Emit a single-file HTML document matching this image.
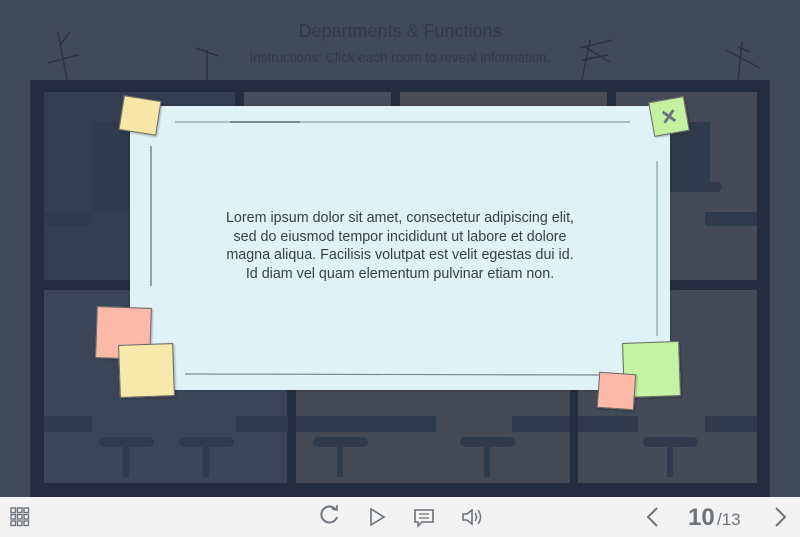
<!DOCTYPE html>
<html><head><style>
*{margin:0;padding:0;box-sizing:border-box}
body{width:800px;height:537px;overflow:hidden;background:#3f4a5b;font-family:"Liberation Sans",sans-serif;position:relative}
.a{position:absolute}
.room{position:absolute;background:#354254}
.note{position:absolute;border:1px solid #6a6a6a;box-shadow:1px 1px 2px rgba(0,0,0,.3)}
</style></head><body>
<div class="a" style="left:0;top:21px;width:800px;text-align:center;color:#2f3a4b;font-size:18px">Departments &amp; Functions</div>
<div class="a" style="left:0;top:50px;width:800px;text-align:center;color:#2f3a4b;font-size:13.4px">Instructions: Click each room to reveal information.</div>
<svg class="a" style="left:0;top:0" width="800" height="90"><g stroke="#2a3342" stroke-width="1.5" fill="none">
<path d="M58 32 L67 80 M48 63 L78 55 M60 45 L70 32"/><path d="M207 50 L207 80 M196 48 L218 56"/>
<path d="M590 40 L582 80 M580 48 L612 40 M582 60 L608 55 M585 47 L610 62"/><path d="M742 42 L738 80 M726 50 L760 68 M738 47 L750 52"/></g></svg>
<div class="a" style="left:30px;top:80px;width:740px;height:417px;background:#242d3f"></div>
<div class="room" style="left:44px;top:92px;width:191px;height:188px;background:#323e51"></div>
<div class="room" style="left:244px;top:92px;width:147px;height:188px;background:#464d5d"></div>
<div class="room" style="left:400px;top:92px;width:207px;height:188px;background:#4a4b57"></div>
<div class="room" style="left:616px;top:92px;width:141px;height:188px;background:#464a58"></div>
<div class="room" style="left:44px;top:290px;width:243px;height:193px;background:#3a4658"></div>
<div class="room" style="left:296px;top:290px;width:274px;height:193px;background:#454955"></div>
<div class="room" style="left:578px;top:290px;width:179px;height:193px;background:#434a58"></div>
<svg class="a" style="left:0;top:0" width="800" height="497"><g fill="#2f3b4c">
<rect x="44" y="416" width="48" height="16"/><rect x="236" y="416" width="52" height="16"/><rect x="296" y="416" width="140" height="16"/><rect x="512" y="416" width="58" height="16"/><rect x="578" y="416" width="60" height="16"/><rect x="705" y="416" width="52" height="16"/>
<rect x="99" y="437" width="55" height="10" rx="5"/><rect x="179" y="437" width="55" height="10" rx="5"/><rect x="313" y="437" width="55" height="10" rx="5"/><rect x="460" y="437" width="55" height="10" rx="5"/><rect x="643" y="437" width="55" height="10" rx="5"/>
<rect x="123" y="447" width="6" height="30"/><rect x="203" y="447" width="6" height="30"/><rect x="337" y="447" width="6" height="30"/><rect x="484" y="447" width="6" height="30"/><rect x="667" y="447" width="6" height="30"/>
<rect x="670" y="182" width="52" height="10" rx="5"/><rect x="44" y="212" width="48" height="14"/><rect x="705" y="212" width="52" height="14"/>
<rect x="92" y="122" width="38" height="90"/><rect x="670" y="122" width="40" height="70"/></g></svg>
<div class="a" style="left:130px;top:106px;width:540px;height:284px;background:#dff2f7;box-shadow:0 0 3px rgba(0,0,0,.3)"></div>
<svg class="a" style="left:130px;top:106px" width="540" height="284"><g stroke="#7a8a94" fill="none">
<path d="M45 16 L500 16" stroke-width="1"/><path d="M100 16 L170 16" stroke-width="2"/>
<path d="M21 40 L21 180" stroke-width="1.5"/><path d="M527 55 L527 230" stroke-width="1"/>
<path d="M55 268 L480 269" stroke-width="1.2"/></g></svg>
<div class="a" style="left:130px;top:209px;width:540px;text-align:center;color:#363e4c;font-size:14.3px;line-height:18.5px">Lorem ipsum dolor sit amet, consectetur adipiscing elit,<br>sed do eiusmod tempor incididunt ut labore et dolore<br>magna aliqua. Facilisis volutpat est velit egestas dui id.<br>Id diam vel quam elementum pulvinar etiam non.</div>
<div class="note" style="left:121px;top:98px;width:38px;height:35px;background:#f7e6a6;transform:rotate(9deg)"></div>
<div class="note" style="left:651px;top:99px;width:36px;height:35px;background:#c5f0a0;transform:rotate(-10deg);color:#6b7480;font-size:26px;font-weight:bold;text-align:center;line-height:33px">×</div>
<div class="note" style="left:96px;top:307px;width:55px;height:52px;background:#fdb8a8;transform:rotate(2deg)"></div>
<div class="note" style="left:119px;top:344px;width:55px;height:53px;background:#f7e8ac;transform:rotate(-2deg)"></div>
<div class="note" style="left:623px;top:342px;width:57px;height:55px;background:#c4f3a3;transform:rotate(-2deg)"></div>
<div class="note" style="left:598px;top:373px;width:37px;height:36px;background:#fdb8a8;transform:rotate(4deg)"></div>
<div class="a" style="left:0;top:497px;width:800px;height:40px;background:#f3f3f3"></div>
<svg class="a" style="left:0;top:497px" width="800" height="40"><g fill="none" stroke="#6c737b" stroke-width="2">
<g stroke-width="1.4"><rect x="11" y="11" width="4.5" height="4.5"/><rect x="17.5" y="11" width="4.5" height="4.5"/><rect x="24" y="11" width="4.5" height="4.5"/><rect x="11" y="17.5" width="4.5" height="4.5"/><rect x="17.5" y="17.5" width="4.5" height="4.5"/><rect x="24" y="17.5" width="4.5" height="4.5"/><rect x="11" y="24" width="4.5" height="4.5"/><rect x="17.5" y="24" width="4.5" height="4.5"/><rect x="24" y="24" width="4.5" height="4.5"/></g>
<path d="M336 13 A8 8 0 1 0 337 20"/><path d="M332 12 L337 13 L337 8" stroke-width="1.6"/>
<path d="M371 12 L384 20 L371 28 Z" stroke-width="1.6"/>
<path d="M415 13 H433 V25 H422 L418 29 V25 H415 Z" stroke-width="1.6"/><path d="M419 17 H429 M419 21 H429" stroke-width="1.3"/>
<path d="M463 17 H467 L472 13 V27 L467 23 H463 Z" stroke-width="1.6"/><path d="M475 16 Q478 20 475 24 M478 13 Q483 20 478 27" stroke-width="1.5"/>
<path d="M657 11 L648 20 L657 29"/><path d="M776 11 L785 20 L776 29"/></g>
<text x="688" y="28" font-family="Liberation Sans" font-size="24" font-weight="bold" fill="#6c737b">10</text>
<text x="717" y="28" font-family="Liberation Sans" font-size="17" fill="#6c737b">/13</text></svg>
</body></html>
